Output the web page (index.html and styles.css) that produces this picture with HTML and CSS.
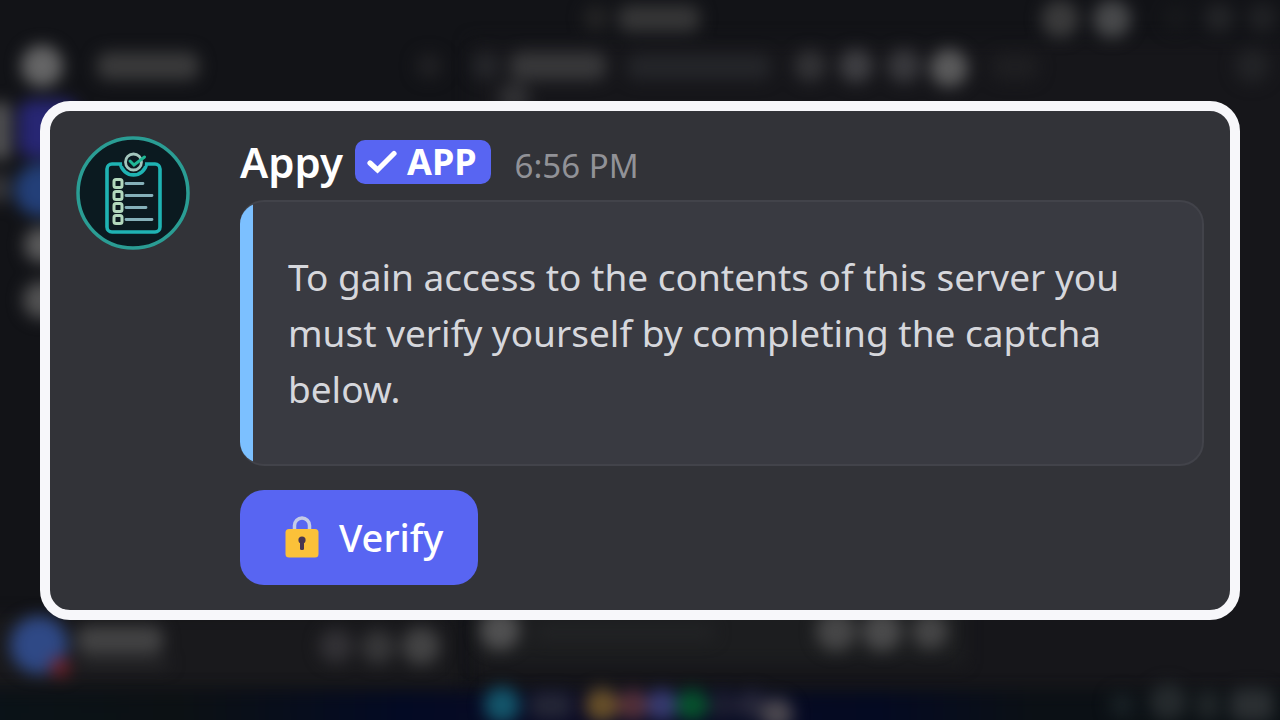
FILE: index.html
```html
<!DOCTYPE html>
<html lang="en">
<head>
  <meta charset="UTF-8" />
  <meta name="viewport" content="width=device-width, initial-scale=1.0"/>
  <title>Appy - Verify</title>
  <link rel="stylesheet" href="styles.css">
</head>
<body>
  <!-- Blurred app window behind the message -->
  <svg class="backdrop" viewBox="0 0 1280 720" preserveAspectRatio="none" aria-hidden="true">
    <defs>
      <filter id="soft" x="-20%" y="-50%" width="140%" height="200%" color-interpolation-filters="sRGB"><feGaussianBlur stdDeviation="8"/></filter>
      <linearGradient id="bar">
        <stop offset="0" stop-color="#0a1218"/>
        <stop offset="0.15" stop-color="#0c1114"/>
        <stop offset="0.32" stop-color="#030a24"/>
        <stop offset="0.45" stop-color="#0b0b24"/>
        <stop offset="0.68" stop-color="#040a22"/>
        <stop offset="0.8" stop-color="#0b1015"/>
        <stop offset="1" stop-color="#0c1115"/>
      </linearGradient>
    </defs>
    <rect width="1280" height="720" fill="#121317"/>
    <rect x="470" y="40" width="850" height="650" fill="#16161a" filter="url(#soft)"/>
    <rect x="-20" y="615" width="480" height="72" fill="#19191c" filter="url(#soft)"/>
    <rect x="475" y="600" width="490" height="64" fill="#1c1d1f" filter="url(#soft)"/>
    <rect x="-20" y="692" width="1320" height="50" fill="url(#bar)" filter="url(#soft)"/>
    <g filter="url(#soft)">
      <!-- title bar -->
      <circle cx="596" cy="18" r="13" fill="#232324"/>
      <rect x="618" y="5" width="82" height="27" rx="10" fill="#363637"/>
      <circle cx="1060" cy="19" r="19" fill="#3a3a3b"/>
      <circle cx="1112" cy="19" r="19" fill="#48494b"/>
      <circle cx="1176" cy="18" r="13" fill="#17181b"/>
      <circle cx="1219" cy="18" r="15" fill="#232427"/>
      <circle cx="1262" cy="18" r="15" fill="#202124"/>
      <!-- toolbar -->
      <circle cx="42" cy="66" r="21" fill="#656566"/>
      <rect x="97" y="52" width="102" height="28" rx="10" fill="#3a3a3b"/>
      <circle cx="429" cy="66" r="13" fill="#202023"/>
      <circle cx="486" cy="66" r="14" fill="#25262a"/>
      <rect x="510" y="52" width="96" height="28" rx="10" fill="#38383a"/>
      <rect x="627" y="54" width="144" height="26" rx="10" fill="#242529"/>
      <circle cx="810" cy="66" r="16" fill="#323235"/>
      <circle cx="856" cy="66" r="17" fill="#3e3e42"/>
      <circle cx="904" cy="66" r="17" fill="#38383c"/>
      <circle cx="949" cy="68" r="19" fill="#5a5a5b"/>
      <rect x="992" y="54" width="46" height="26" rx="10" fill="#1e1e21"/>
      <circle cx="1252" cy="66" r="17" fill="#222326"/>
      <circle cx="514" cy="98" r="16" fill="#303033"/>
      <!-- server list -->
      <rect x="-10" y="102" width="20" height="58" rx="8" fill="#565658"/>
      <rect x="-10" y="173" width="18" height="30" rx="8" fill="#3a3a3d"/>
      <rect x="18" y="100" width="60" height="58" rx="14" fill="#272673"/>
      <circle cx="41" cy="190" r="27" fill="#233f78"/>
      <circle cx="42" cy="245" r="18" fill="#5a5a5b"/>
      <circle cx="42" cy="300" r="19" fill="#525253"/>
      <!-- user area -->
      <circle cx="39" cy="645" r="29" fill="#2f4986"/>
      <circle cx="60" cy="667" r="10" fill="#702027"/>
      <rect x="77" y="626" width="86" height="28" rx="10" fill="#434344"/>
      <rect x="77" y="659" width="92" height="8" rx="4" fill="#29292b"/>
      <circle cx="336" cy="646" r="17" fill="#323135"/>
      <circle cx="378" cy="647" r="17" fill="#363638"/>
      <circle cx="421" cy="646" r="19" fill="#434344"/>
      <circle cx="500" cy="630" r="20" fill="#505051"/>
      <rect x="535" y="624" width="180" height="16" rx="8" fill="#222325"/>
      <circle cx="836" cy="631" r="20" fill="#464647"/>
      <circle cx="882" cy="631" r="20" fill="#4a4a4b"/>
      <circle cx="930" cy="631" r="18" fill="#454546"/>
      <!-- taskbar -->
      <circle cx="502" cy="705" r="18" fill="#14566b"/>
      <rect x="530" y="692" width="42" height="27" rx="8" fill="#242636"/>
      <circle cx="602" cy="705" r="17" fill="#685029"/>
      <circle cx="633" cy="705" r="16" fill="#543039"/>
      <circle cx="662" cy="705" r="16" fill="#383b70"/>
      <circle cx="692" cy="705" r="16" fill="#07532d"/>
      <circle cx="723" cy="705" r="15" fill="#1c1d30"/>
      <circle cx="752" cy="705" r="15" fill="#262638"/>
      <circle cx="777" cy="714" r="16" fill="#4c484f"/>
      <circle cx="1122" cy="705" r="13" fill="#182024"/>
      <circle cx="1168" cy="702" r="19" fill="#252a2d"/>
      <rect x="1196" y="690" width="24" height="30" rx="8" fill="#202528"/>
      <rect x="1230" y="688" width="44" height="34" rx="10" fill="#2b2f32"/>
    </g>
  </svg>

  <main class="panel">
    <svg class="avatar" viewBox="0 0 114 114" role="img" aria-label="Appy avatar">
      <circle cx="57" cy="57" r="55" fill="#0b1a20" stroke="#2a9d94" stroke-width="3.5"/>
      <path d="M44.500 28H36a5 5 0 0 0-5 5v58a5 5 0 0 0 5 5h43a5 5 0 0 0 5-5V33a5 5 0 0 0-5-5h-8.500a13.200 13.200 0 0 1-26 0z" fill="none" stroke="#1fb3b3" stroke-width="3.600"/>
      <path d="M46.500 28a11.500 11.500 0 0 1 22 0z" fill="#0b1a20"/>
      <rect x="46.300" y="25" width="22.400" height="5" fill="#0b1a20"/>
      <circle cx="57.500" cy="26" r="8" fill="none" stroke="#a3c6bd" stroke-width="2.800"/>
      <path d="M54 25l4 4 10.500-8" fill="none" stroke="#20b795" stroke-width="3" stroke-linecap="round"/>
      <g fill="none" stroke="#b2d8bd" stroke-width="3">
        <rect x="38" y="43.500" width="8" height="8" rx="2"/>
        <rect x="38" y="55.500" width="8" height="8" rx="2"/>
        <rect x="38" y="67.500" width="8" height="8" rx="2"/>
        <rect x="38" y="79.500" width="8" height="8" rx="2"/>
      </g>
      <path d="M50 47.500h17M50 59.500h26M50 71.500h20M50 83.500h26" stroke="#85b1ba" stroke-width="2.800" stroke-linecap="round"/>
    </svg>

    <div class="message">
      <div class="header">
        <span class="name">Appy</span>
        <span class="badge">
          <svg class="check" viewBox="0 0 30 24" aria-hidden="true"><path d="M3 13l7.500 7L27 3.500" fill="none" stroke="#fff" stroke-width="5.200" stroke-linecap="round"/></svg>
          APP
        </span>
        <time class="time" datetime="18:56">6:56 PM</time>
      </div>

      <div class="embed">
        <p>To gain access to the contents of this server you must verify yourself by completing the captcha below.</p>
      </div>

      <button class="btn" type="button">
        <svg class="lock" viewBox="0 0 34 42" aria-hidden="true">
          <path d="M9.500 16V9.500a7.500 7.500 0 0 1 15 0V16" fill="none" stroke="#c5cbe6" stroke-width="3.500"/>
          <rect x="0.500" y="13" width="33" height="28.500" rx="3.500" fill="#fbc139"/>
          <circle cx="17" cy="24" r="3.600" fill="#493650"/>
          <rect x="15" y="25" width="4" height="9" rx="1.500" fill="#493650"/>
        </svg>
        Verify
      </button>
    </div>
  </main>
</body>
</html>
```
FILE: styles.css
```css
* {
  box-sizing: border-box;
  margin: 0;
  padding: 0;
}

body {
  background-color: #121317;
  font-family: 'Noto Sans', 'Open Sans', sans-serif;
  color: #ffffff;
  display: flex;
  justify-content: center;
  align-items: center;
  padding: 40px;
  min-height: 100vh;
}

.backdrop {
  position: fixed;
  inset: 0;
  width: 100%;
  height: 100%;
}

.panel {
  position: relative;
  display: flex;
  align-items: flex-start;
  gap: 50px;
  width: 100%;
  background-color: #323338;
  border: 10px solid #f7f7fa;
  border-radius: 30px;
  padding: 25px 26px;
}

.avatar {
  flex: none;
  width: 114px;
  height: 114px;
}

.message {
  flex: 1;
  min-width: 0;
}

.header {
  display: flex;
  align-items: center;
  height: 52px;
  margin-bottom: 12px;
}

.name {
  font-size: 42px;
  font-weight: 600;
  line-height: 52px;
}

.badge {
  display: flex;
  align-items: center;
  gap: 10px;
  height: 44px;
  margin-left: 12px;
  padding: 0 14px 0 12px;
  border-radius: 10px;
  background-color: #5865f2;
  font-size: 36px;
  font-weight: 700;
}

.check {
  width: 30px;
  height: 24px;
}

.time {
  margin-left: 24px;
  padding-top: 8px;
  color: #919297;
  font-size: 33px;
  line-height: 44px;
}

.embed {
  position: relative;
  overflow: hidden;
  border: 2px solid #42434a;
  border-left: none;
  border-radius: 24px;
  background-color: #393a41;
  padding: 47px 46px 47px 48px;
}

.embed::before {
  content: '';
  position: absolute;
  inset: 0 auto 0 0;
  width: 13px;
  background-color: #7cc0ff;
}

.embed p {
  color: #d6d7dc;
  font-size: 37px;
  line-height: 56px;
}

.btn {
  display: flex;
  align-items: center;
  gap: 20px;
  height: 95px;
  margin-top: 24px;
  padding: 0 35px 0 45px;
  border: none;
  border-radius: 24px;
  background-color: #5865f2;
  color: #ffffff;
  font-family: inherit;
  font-size: 38px;
  font-weight: 500;
  cursor: pointer;
}

.btn:hover {
  background-color: #4752c4;
}

.lock {
  width: 34px;
  height: 42px;
}
```
